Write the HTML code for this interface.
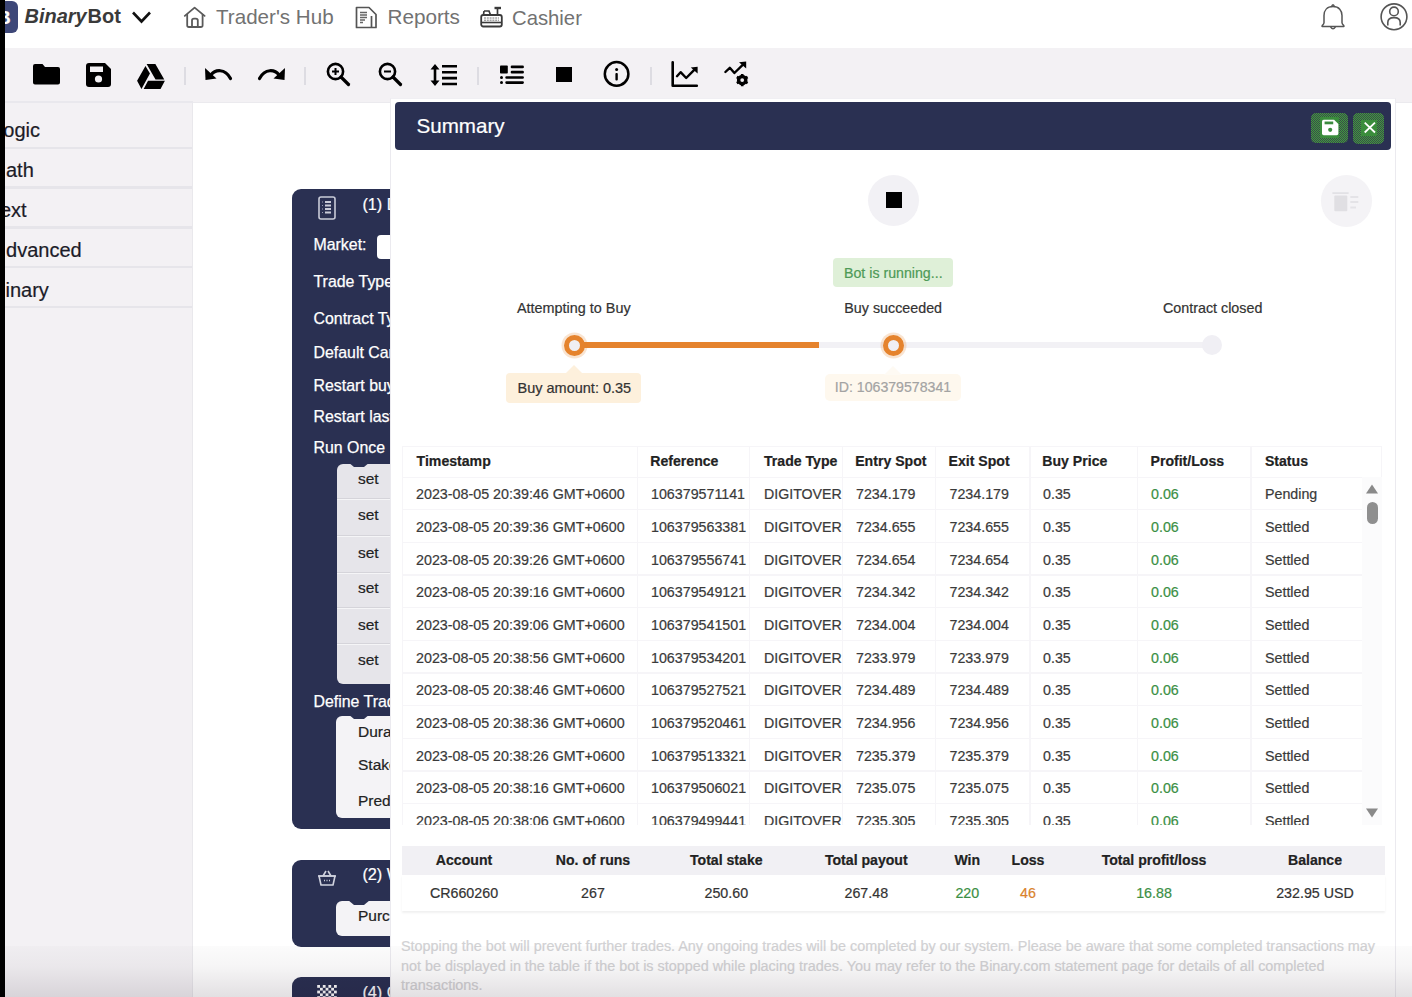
<!DOCTYPE html>
<html><head><meta charset="utf-8">
<style>
*{margin:0;padding:0;box-sizing:border-box}
html,body{width:1412px;height:997px;overflow:hidden;background:#fff;font-family:"Liberation Sans",sans-serif;color:#333;position:relative}
.a{position:absolute}
.t{position:absolute;white-space:nowrap;line-height:1;-webkit-text-stroke:0.2px currentColor}
svg.a{display:block;overflow:visible}
</style></head><body>
<div id="root" style="position:absolute;left:0;top:0;width:1412px;height:997px;overflow:hidden;">
<div class="a" style="left:0.00px;top:0.00px;width:1412.00px;height:48.00px;background:#fff;"></div>
<div class="a" style="left:-14.00px;top:1.00px;width:31.50px;height:31.50px;background:#3d4778;border-radius:6px;"></div>
<div class="t" style="left:-3.00px;top:7.92px;font-size:19px;color:#fff;font-weight:bold;">B</div>
<div class="t" style="left:24.50px;top:5.77px;font-size:20px;color:#3a3a3a;font-weight:bold;font-style:italic;-webkit-text-stroke:0;">Binary</div>
<div class="t" style="left:87.50px;top:5.77px;font-size:20px;color:#3a3a3a;font-weight:bold;-webkit-text-stroke:0;">Bot</div>
<svg class="a" style="left:131px;top:10px;" width="21" height="14" viewBox="0 0 21 14"><polyline points="2,2.5 10.5,11.5 19,2.5" fill="none" stroke="#111" stroke-width="2.6"/></svg>
<svg class="a" style="left:183px;top:5px;" width="24" height="24" viewBox="0 0 24 24"><path d="M1.8 10.9 L11.6 2.6 L21.6 10.9" fill="none" stroke="#5a5a5a" stroke-width="1.8" stroke-linecap="round" stroke-linejoin="round"/><path d="M4.2 9 V20.2 Q4.2 22 6 22 H17.8 Q19.6 22 19.6 20.2 V9" fill="none" stroke="#5a5a5a" stroke-width="1.8"/><path d="M9 22 V15.5 Q9 13.6 11 13.6 H12.8 Q14.8 13.6 14.8 15.5 V22" fill="none" stroke="#5a5a5a" stroke-width="1.8"/></svg>
<div class="t" style="left:216.00px;top:7.36px;font-size:20.6px;color:#727272;-webkit-text-stroke:0;">Trader's Hub</div>
<svg class="a" style="left:354px;top:5px;" width="25" height="24" viewBox="0 0 25 24"><path d="M2.5 2.5 H15 L22 9.5 V22.5 H2.5 Z M17.5 11 V22.5" fill="none" stroke="#555" stroke-width="1.7" stroke-linejoin="round"/><path d="M6 7.5 H13 M6 10 H13 M6 12.5 H13 M6 15 H11 M6 17.5 H9" stroke="#666" stroke-width="1.6"/></svg>
<div class="t" style="left:387.50px;top:7.28px;font-size:20.7px;color:#727272;-webkit-text-stroke:0;">Reports</div>
<svg class="a" style="left:480px;top:6px;" width="23" height="22" viewBox="0 0 23 22"><rect x="1.2" y="9" width="20.6" height="11.5" rx="2" fill="none" stroke="#3a3a3a" stroke-width="1.8"/><path d="M1.5 16.5 H21.5" stroke="#3a3a3a" stroke-width="1.6"/><path d="M4 5 H9 L10.5 9 M3.5 9 L4 5" fill="none" stroke="#3a3a3a" stroke-width="1.7"/><path d="M14.5 2 H21" stroke="#3a3a3a" stroke-width="2.4"/><path d="M17.5 3 V9" stroke="#3a3a3a" stroke-width="1.7"/><path d="M4 12 H19 M4 14.2 H19" stroke="#777" stroke-width="1" stroke-dasharray="2 0.8"/></svg>
<div class="t" style="left:512.00px;top:7.62px;font-size:20.3px;color:#727272;-webkit-text-stroke:0;">Cashier</div>
<svg class="a" style="left:1318px;top:2px;" width="30" height="30" viewBox="0 0 30 30"><path d="M15 4.6 C9 4.6 6 8.5 6 13.5 V20.8 Q6 22 4.2 23.6 Q3.5 24.6 5 24.6 H25 Q26.5 24.6 25.8 23.6 Q24 22 24 20.8 V13.5 C24 8.5 21 4.6 15 4.6 Z" fill="none" stroke="#555" stroke-width="1.5" stroke-linejoin="round"/><path d="M13.4 5 Q15 0.4 16.6 5" fill="none" stroke="#555" stroke-width="1.5"/><path d="M12.6 24.8 Q15 28.6 17.4 24.8" fill="none" stroke="#555" stroke-width="1.5"/></svg>
<svg class="a" style="left:1378px;top:2px;" width="32" height="31" viewBox="0 0 32 31"><circle cx="16" cy="14.8" r="12.9" fill="none" stroke="#555" stroke-width="1.6"/><circle cx="16" cy="9.4" r="4.3" fill="none" stroke="#555" stroke-width="1.6"/><path d="M9.8 23.5 V20.5 C9.8 17.2 12.5 15.6 16 15.6 C19.5 15.6 22.2 17.2 22.2 20.5 V23.5" fill="none" stroke="#555" stroke-width="1.6"/></svg>
<div class="a" style="left:0.00px;top:48.00px;width:1412.00px;height:54.00px;background:#f3f1f4;"></div>
<div class="a" style="left:0.00px;top:101.50px;width:1412.00px;height:1.00px;background:#ebeaee;"></div>
<svg class="a" style="left:33px;top:63px;" width="27" height="22" viewBox="0 0 27 22"><path d="M0 3 Q0 1 2 1 H9.5 L12 4 H25 Q27 4 27 6 V19.5 Q27 21.5 25 21.5 H2 Q0 21.5 0 19.5 Z" fill="#000"/></svg>
<svg class="a" style="left:86px;top:63px;" width="25" height="24" viewBox="0 0 25 24"><path d="M0 3 Q0 0 3 0 H19 L25 6 V21 Q25 24 22 24 H3 Q0 24 0 21 Z" fill="#000"/><rect x="4" y="3.5" width="13" height="5.5" fill="#f3f1f4"/><circle cx="12.5" cy="16" r="3.6" fill="#f3f1f4"/></svg>
<svg class="a" style="left:137px;top:64px;" width="28" height="25" viewBox="0 0 512 460"><path d="M339 282.9L175.4 0h161.2l163.6 282.9H339zm-137.5 23.6L120.9 460h310.5L512 306.5H201.5zM154.1 35.4L0 306.5 80.6 460 237 176.8 154.1 35.4z" fill="#000"/></svg>
<div class="a" style="left:183.50px;top:67.00px;width:2.00px;height:18.00px;background:#dddce2;"></div>
<svg class="a" style="left:204px;top:66px;" width="30" height="16" viewBox="0 0 30 16"><path d="M7 9 C11 3.5 21 2 26.5 12.5" fill="none" stroke="#000" stroke-width="3.2" stroke-linecap="round"/><path d="M1 2 L1.5 14 L12.5 12.5 Z" fill="#000"/></svg>
<svg class="a" style="left:256px;top:66px;" width="30" height="16" viewBox="0 0 30 16"><g transform="translate(30,0) scale(-1,1)"><path d="M7 9 C11 3.5 21 2 26.5 12.5" fill="none" stroke="#000" stroke-width="3.2" stroke-linecap="round"/><path d="M1 2 L1.5 14 L12.5 12.5 Z" fill="#000"/></g></svg>
<div class="a" style="left:303.50px;top:67.00px;width:2.00px;height:18.00px;background:#dddce2;"></div>
<svg class="a" style="left:326px;top:62px;" width="25" height="24" viewBox="0 0 25 24"><circle cx="9.5" cy="9.5" r="7.6" fill="none" stroke="#000" stroke-width="2.6"/><path d="M15 15 L22.5 22.5" stroke="#000" stroke-width="3.2" stroke-linecap="round"/><path d="M9.5 6 V13 M6 9.5 H13" stroke="#000" stroke-width="2"/></svg>
<svg class="a" style="left:378px;top:62px;" width="25" height="24" viewBox="0 0 25 24"><circle cx="9.5" cy="9.5" r="7.6" fill="none" stroke="#000" stroke-width="2.6"/><path d="M15 15 L22.5 22.5" stroke="#000" stroke-width="3.2" stroke-linecap="round"/><path d="M6 9.5 H13" stroke="#000" stroke-width="2"/></svg>
<svg class="a" style="left:429px;top:63px;" width="29" height="24" viewBox="0 0 29 24"><path d="M6 3 V21" stroke="#000" stroke-width="2.6"/><path d="M1.5 6.5 L6 1 L10.5 6.5 Z M1.5 17.5 L6 23 L10.5 17.5 Z" fill="#000"/><path d="M13 3.3 H28 M13 9.3 H28 M13 15.1 H28 M13 21 H28" stroke="#000" stroke-width="2.6"/></svg>
<div class="a" style="left:477.00px;top:67.00px;width:2.00px;height:18.00px;background:#dddce2;"></div>
<svg class="a" style="left:499px;top:65px;" width="26" height="20" viewBox="0 0 26 20"><rect x="1" y="0.6" width="7.8" height="7.9" rx="0.8" fill="#000"/><path d="M13 1.9 H23.6 M13 7.2 H23.6 M7.6 12.5 H23.6 M7.6 17.6 H23.6" stroke="#000" stroke-width="2.7" stroke-linecap="round"/><circle cx="2.5" cy="12.5" r="1.5" fill="#000"/><circle cx="2.5" cy="17.6" r="1.5" fill="#000"/></svg>
<div class="a" style="left:556.40px;top:66.60px;width:15.90px;height:15.60px;background:#000;"></div>
<svg class="a" style="left:602px;top:61px;" width="29" height="27" viewBox="0 0 29 27"><circle cx="14.6" cy="12.9" r="11.8" fill="none" stroke="#000" stroke-width="2.5"/><circle cx="14.6" cy="8.5" r="1.5" fill="#000"/><rect x="13.4" y="12" width="2.4" height="7.4" rx="1" fill="#000"/></svg>
<div class="a" style="left:650.00px;top:67.00px;width:2.00px;height:18.00px;background:#dddce2;"></div>
<svg class="a" style="left:670px;top:61px;" width="29" height="27" viewBox="0 0 29 27"><path d="M2.7 1.2 V24.8 H26.8" fill="none" stroke="#000" stroke-width="2.6" stroke-linecap="round" stroke-linejoin="round"/><path d="M7 15.2 L10.6 11.2 L16.2 17 L24 9.2" fill="none" stroke="#000" stroke-width="2.4" stroke-linecap="round" stroke-linejoin="round"/><path d="M20.8 6.6 L27.6 5.8 L27.6 12.4 Z" fill="#000"/></svg>
<svg class="a" style="left:723px;top:61px;" width="27" height="26" viewBox="0 0 27 26"><path d="M2.4 11 L6.8 6.8 L11.4 12 L20.5 3.2" fill="none" stroke="#000" stroke-width="2.4" stroke-linecap="round" stroke-linejoin="round"/><path d="M16 1.3 L23.2 0.6 L23.2 7.6 Z" fill="#000"/><g transform="translate(19.2,19.1)"><circle r="3.9" fill="none" stroke="#000" stroke-width="2.8"/><path d="M0 -6.2 V6.2 M-5.4 -3.1 L5.4 3.1 M-5.4 3.1 L5.4 -3.1" stroke="#000" stroke-width="2.6"/><circle r="1.9" fill="#f3f1f4"/></g></svg>
<div class="a" style="left:0.00px;top:101.00px;width:193.00px;height:896.00px;background:#f3f1f4;border-right:1.5px solid #e9e8ec;"></div>
<div class="a" style="left:0.00px;top:101.00px;width:193.00px;height:2.00px;background:#e9e8ed;"></div>
<div class="a" style="left:0.00px;top:146.50px;width:192.00px;height:2.50px;background:#e6e5ea;"></div>
<div class="t" style="left:-7.80px;top:120.27px;font-size:20px;color:#1c1c28;">Logic</div>
<div class="a" style="left:0.00px;top:186.30px;width:192.00px;height:2.50px;background:#e6e5ea;"></div>
<div class="t" style="left:5.96px;top:160.17px;font-size:20px;color:#1c1c28;">ath</div>
<div class="a" style="left:0.00px;top:226.10px;width:192.00px;height:2.50px;background:#e6e5ea;"></div>
<div class="t" style="left:-10.10px;top:200.07px;font-size:20px;color:#1c1c28;">Text</div>
<div class="a" style="left:0.00px;top:265.90px;width:192.00px;height:2.50px;background:#e6e5ea;"></div>
<div class="t" style="left:6.04px;top:239.97px;font-size:20px;color:#1c1c28;">dvanced</div>
<div class="a" style="left:0.00px;top:305.70px;width:192.00px;height:2.50px;background:#e6e5ea;"></div>
<div class="t" style="left:-7.90px;top:279.87px;font-size:20px;color:#1c1c28;">Binary</div>
<div class="a" style="left:291.50px;top:189.00px;width:140.00px;height:640.00px;background:#2a3052;border-radius:9px;"></div>
<svg class="a" style="left:318px;top:196px;" width="18" height="24" viewBox="0 0 18 24"><rect x="1" y="1" width="16" height="22" rx="2" fill="none" stroke="#c9cbd8" stroke-width="1.6"/><path d="M7 6 H13 M7 9.5 H13 M7 13 H13 M7 16.5 H13" stroke="#c9cbd8" stroke-width="1.8"/><path d="M4 6 H5 M4 9.5 H5 M4 13 H5 M4 16.5 H5" stroke="#9a9db5" stroke-width="1"/></svg>
<div class="t" style="left:362.40px;top:196.00px;font-size:16.3px;color:#fff;">(1) Define</div>
<div class="a" style="left:377.00px;top:235.00px;width:40.00px;height:23.50px;background:#fff;border-radius:4px;"></div>
<div class="t" style="left:313.50px;top:237.44px;font-size:15.9px;color:#fff;-webkit-text-stroke:0.25px #fff;">Market:</div>
<div class="t" style="left:313.50px;top:274.14px;font-size:15.9px;color:#fff;-webkit-text-stroke:0.25px #fff;">Trade Type</div>
<div class="t" style="left:313.50px;top:311.24px;font-size:15.9px;color:#fff;-webkit-text-stroke:0.25px #fff;">Contract Type</div>
<div class="t" style="left:313.50px;top:344.64px;font-size:15.9px;color:#fff;-webkit-text-stroke:0.25px #fff;">Default Candle</div>
<div class="t" style="left:313.50px;top:378.34px;font-size:15.9px;color:#fff;-webkit-text-stroke:0.25px #fff;">Restart buy/sell</div>
<div class="t" style="left:313.50px;top:408.74px;font-size:15.9px;color:#fff;-webkit-text-stroke:0.25px #fff;">Restart last</div>
<div class="t" style="left:313.50px;top:440.34px;font-size:15.9px;color:#fff;-webkit-text-stroke:0.25px #fff;">Run Once</div>
<div class="t" style="left:313.50px;top:693.94px;font-size:15.9px;color:#fff;-webkit-text-stroke:0.25px #fff;">Define Trade</div>
<div class="a" style="left:336.50px;top:463.80px;width:80.00px;height:220.50px;background:#e6e5ea;border-radius:6px 0 0 6px;"></div>
<div class="a" style="left:336.50px;top:497.60px;width:80.00px;height:1.00px;background:#d5d4da;"></div>
<div class="a" style="left:336.50px;top:498.60px;width:80.00px;height:1.00px;background:#f5f5f7;"></div>
<div class="a" style="left:336.50px;top:535.20px;width:80.00px;height:1.00px;background:#d5d4da;"></div>
<div class="a" style="left:336.50px;top:536.20px;width:80.00px;height:1.00px;background:#f5f5f7;"></div>
<div class="a" style="left:336.50px;top:571.50px;width:80.00px;height:1.00px;background:#d5d4da;"></div>
<div class="a" style="left:336.50px;top:572.50px;width:80.00px;height:1.00px;background:#f5f5f7;"></div>
<div class="a" style="left:336.50px;top:607.40px;width:80.00px;height:1.00px;background:#d5d4da;"></div>
<div class="a" style="left:336.50px;top:608.40px;width:80.00px;height:1.00px;background:#f5f5f7;"></div>
<div class="a" style="left:336.50px;top:643.00px;width:80.00px;height:1.00px;background:#d5d4da;"></div>
<div class="a" style="left:336.50px;top:644.00px;width:80.00px;height:1.00px;background:#f5f5f7;"></div>
<div class="t" style="left:358.00px;top:470.68px;font-size:15.5px;color:#222;">set</div>
<div class="t" style="left:358.00px;top:506.58px;font-size:15.5px;color:#222;">set</div>
<div class="t" style="left:358.00px;top:544.68px;font-size:15.5px;color:#222;">set</div>
<div class="t" style="left:358.00px;top:580.28px;font-size:15.5px;color:#222;">set</div>
<div class="t" style="left:358.00px;top:616.88px;font-size:15.5px;color:#222;">set</div>
<div class="t" style="left:358.00px;top:652.38px;font-size:15.5px;color:#222;">set</div>
<svg class="a" style="left:348px;top:462px;" width="24" height="6" viewBox="0 0 24 6"><path d="M0 0 L6 5 H16 L22 0 Z" fill="#2a3052"/></svg>
<div class="a" style="left:336.00px;top:715.60px;width:80.00px;height:102.60px;background:#f4f3f6;border-radius:6px 0 0 6px;"></div>
<svg class="a" style="left:348px;top:714px;" width="24" height="6" viewBox="0 0 24 6"><path d="M0 0 L6 5 H16 L22 0 Z" fill="#2a3052"/></svg>
<div class="t" style="left:358.00px;top:724.08px;font-size:15.5px;color:#222;">Duration</div>
<div class="t" style="left:358.00px;top:757.48px;font-size:15.5px;color:#222;">Stake</div>
<div class="t" style="left:358.00px;top:793.38px;font-size:15.5px;color:#222;">Prediction</div>
<div class="a" style="left:291.50px;top:859.50px;width:140.00px;height:87.50px;background:#2a3052;border-radius:9px;"></div>
<svg class="a" style="left:317px;top:869px;" width="20" height="18" viewBox="0 0 20 18"><path d="M2 7 H18 L16 16 H4 Z" fill="none" stroke="#d0d2de" stroke-width="1.6" stroke-linejoin="round"/><path d="M6 7 L9 2 M14 7 L11 2 M1 7 H19" stroke="#d0d2de" stroke-width="1.6"/><path d="M7 11.5 H8 M9.5 11.5 H10.5 M12 11.5 H13" stroke="#d0d2de" stroke-width="1.4"/></svg>
<div class="t" style="left:362.40px;top:866.30px;font-size:16.3px;color:#fff;">(2) Watch</div>
<div class="a" style="left:336.00px;top:900.80px;width:80.00px;height:35.00px;background:#f4f3f6;border-radius:6px 0 0 6px;"></div>
<svg class="a" style="left:348px;top:899.5px;" width="24" height="6" viewBox="0 0 24 6"><path d="M0 0 L6 5 H16 L22 0 Z" fill="#2a3052"/></svg>
<div class="t" style="left:358.00px;top:908.38px;font-size:15.5px;color:#222;">Purchase</div>
<div class="a" style="left:291.50px;top:977.00px;width:140.00px;height:40.00px;background:#2a3052;border-radius:9px;"></div>
<svg class="a" style="left:317px;top:985px;" width="20" height="14" viewBox="0 0 21 15"><rect x="0" y="0" width="3" height="3" fill="#fff"/><rect x="6" y="0" width="3" height="3" fill="#fff"/><rect x="12" y="0" width="3" height="3" fill="#fff"/><rect x="18" y="0" width="3" height="3" fill="#fff"/><rect x="3" y="3" width="3" height="3" fill="#fff"/><rect x="9" y="3" width="3" height="3" fill="#fff"/><rect x="15" y="3" width="3" height="3" fill="#fff"/><rect x="0" y="6" width="3" height="3" fill="#fff"/><rect x="6" y="6" width="3" height="3" fill="#fff"/><rect x="12" y="6" width="3" height="3" fill="#fff"/><rect x="18" y="6" width="3" height="3" fill="#fff"/><rect x="3" y="9" width="3" height="3" fill="#fff"/><rect x="9" y="9" width="3" height="3" fill="#fff"/><rect x="15" y="9" width="3" height="3" fill="#fff"/><rect x="0" y="12" width="3" height="3" fill="#fff"/><rect x="6" y="12" width="3" height="3" fill="#fff"/><rect x="12" y="12" width="3" height="3" fill="#fff"/><rect x="18" y="12" width="3" height="3" fill="#fff"/></svg>
<div class="t" style="left:362.40px;top:983.80px;font-size:16.3px;color:#fff;">(4) Conditions</div>
<div class="a" id="panel" style="left:390px;top:98px;width:1006px;height:899px;background:#fff;border-left:1px solid #ebeaef;border-right:1.5px solid #ebeaef;border-top:1px solid #f0eff3;">
</div>
<div class="a" style="left:395.00px;top:102.30px;width:996.30px;height:48.20px;background:#2a3052;border-radius:4px;"></div>
<div class="t" style="left:416.50px;top:116.16px;font-size:20.6px;color:#fff;">Summary</div>
<div class="a" style="left:1311.30px;top:113.00px;width:36.50px;height:30.00px;background:#3b8b3e;border-radius:5px;background:repeating-conic-gradient(#3f9a40 0 25%, #3a4a48 0 50%) 0 0/2px 2px;"></div>
<div class="a" style="left:1320.00px;top:117.30px;width:19.00px;height:21.00px;background:#3a8d3c;border-radius:2px;"></div>
<svg class="a" style="left:1322px;top:119.2px;" width="16.4" height="16.8" viewBox="0 0 19 18"><path d="M0 2 Q0 0 2 0 H14 L19 5 V16 Q19 18 17 18 H2 Q0 18 0 16 Z" fill="#fff"/><rect x="3" y="2.2" width="10" height="3.2" fill="#3b8b3e"/><circle cx="9.5" cy="11.8" r="2.4" fill="#3b8b3e"/></svg>
<div class="a" style="left:1352.90px;top:113.00px;width:31.30px;height:31.00px;background:#3b8b3e;border-radius:5px;background:repeating-conic-gradient(#3f9a40 0 25%, #3a4a48 0 50%) 0 0/2px 2px;"></div>
<div class="a" style="left:1361.30px;top:120.00px;width:15.40px;height:16.40px;background:#3a8d3c;"></div>
<svg class="a" style="left:1363.6px;top:122.4px;" width="11.7" height="11.2" viewBox="0 0 11.7 11.2"><path d="M0.7 0.7 L11 10.5 M11 0.7 L0.7 10.5" stroke="#fff" stroke-width="1.8"/></svg>
<div class="a" style="left:867.50px;top:174.50px;width:51.50px;height:51.50px;background:#f2f1f5;border-radius:50%;"></div>
<div class="a" style="left:885.50px;top:192.00px;width:16.00px;height:16.00px;background:#000;"></div>
<div class="a" style="left:1320.80px;top:175.00px;width:51.50px;height:51.50px;background:#f4f3f6;border-radius:50%;"></div>
<svg class="a" style="left:1330px;top:188px;" width="30" height="26" viewBox="0 0 30 26"><rect x="2.4" y="4.2" width="16.2" height="1.8" fill="#e2e1e5"/><rect x="4.3" y="7.6" width="13" height="15.6" rx="1" fill="#e0dfe3"/><path d="M20.3 9 H28.3 M20.3 14.1 H28.3 M20.3 19.4 H26" stroke="#e4e3e7" stroke-width="2"/></svg>
<div class="a" style="left:832.80px;top:257.70px;width:120.40px;height:29.50px;background:#dff0d8;border-radius:4px;"></div>
<div class="t" style="left:844.00px;top:265.98px;font-size:14.2px;color:#4e9a57;">Bot is running...</div>
<div class="t" style="left:517.00px;top:301.31px;font-size:14.4px;color:#333;">Attempting to Buy</div>
<div class="t" style="left:844.30px;top:301.30px;font-size:14.3px;color:#333;">Buy succeeded</div>
<div class="t" style="left:1163.00px;top:301.30px;font-size:14.3px;color:#333;">Contract closed</div>
<div class="a" style="left:574.00px;top:342.00px;width:645.00px;height:5.50px;background:#f2f1f5;"></div>
<div class="a" style="left:574.00px;top:341.80px;width:245.00px;height:5.80px;background:#e5832d;"></div>
<div class="a" style="left:563.50px;top:334.50px;width:21.00px;height:21.00px;background:#f0eff4;border-radius:50%;border:5.2px solid #e5832d;box-shadow:0 0 0 2.5px rgba(229,131,45,0.22);"></div>
<div class="a" style="left:882.50px;top:334.50px;width:21.00px;height:21.00px;background:#f0eff4;border-radius:50%;border:5.2px solid #e5832d;box-shadow:0 0 0 2.5px rgba(229,131,45,0.22);"></div>
<div class="a" style="left:1202.00px;top:335.00px;width:20.00px;height:20.00px;background:#f0eff4;border-radius:50%;"></div>
<div class="a" style="left:506.00px;top:373.00px;width:135.00px;height:30.00px;background:#fdf0dc;border-radius:4px;"></div>
<svg class="a" style="left:565px;top:364px;" width="18" height="10" viewBox="0 0 18 10"><path d="M0 10 L9 1 L18 10 Z" fill="#fdf0dc"/></svg>
<div class="t" style="left:517.50px;top:381.03px;font-size:14.5px;color:#333;">Buy amount: 0.35</div>
<div class="a" style="left:825.00px;top:373.60px;width:136.00px;height:27.50px;background:#fef8ee;border-radius:5px;"></div>
<svg class="a" style="left:884px;top:365px;" width="18" height="10" viewBox="0 0 18 10"><path d="M0 10 L9 1 L18 10 Z" fill="#fefaf3"/></svg>
<div class="t" style="left:834.80px;top:380.02px;font-size:14.15px;color:#a3a3a3;">ID: 106379578341</div>
<div class="a" style="left:402px;top:446px;width:980px;height:379px;overflow:hidden;">
<div class="a" style="left:0;top:0;width:980px;height:31.5px;border:1px solid #f6f5f8;"></div>
<div class="t" style="left:14.60px;top:8.36px;font-size:14.1px;color:#222;font-weight:bold;">Timestamp</div>
<div class="t" style="left:248.30px;top:8.36px;font-size:14.1px;color:#222;font-weight:bold;">Reference</div>
<div class="t" style="left:362.00px;top:8.36px;font-size:14.1px;color:#222;font-weight:bold;">Trade Type</div>
<div class="t" style="left:453.20px;top:8.36px;font-size:14.1px;color:#222;font-weight:bold;">Entry Spot</div>
<div class="t" style="left:546.60px;top:8.36px;font-size:14.1px;color:#222;font-weight:bold;">Exit Spot</div>
<div class="t" style="left:640.30px;top:8.36px;font-size:14.1px;color:#222;font-weight:bold;">Buy Price</div>
<div class="t" style="left:748.50px;top:8.36px;font-size:14.1px;color:#222;font-weight:bold;">Profit/Loss</div>
<div class="t" style="left:862.90px;top:8.36px;font-size:14.1px;color:#222;font-weight:bold;">Status</div>
<div class="a" style="left:234.50px;top:0.00px;width:1.20px;height:379.00px;background:#f6f5f8;"></div>
<div class="a" style="left:347.10px;top:0.00px;width:1.20px;height:379.00px;background:#f6f5f8;"></div>
<div class="a" style="left:440.00px;top:0.00px;width:1.20px;height:379.00px;background:#f6f5f8;"></div>
<div class="a" style="left:533.00px;top:0.00px;width:1.20px;height:379.00px;background:#f6f5f8;"></div>
<div class="a" style="left:627.40px;top:0.00px;width:1.20px;height:379.00px;background:#f6f5f8;"></div>
<div class="a" style="left:735.10px;top:0.00px;width:1.20px;height:379.00px;background:#f6f5f8;"></div>
<div class="a" style="left:848.40px;top:0.00px;width:1.20px;height:379.00px;background:#f6f5f8;"></div>
<div class="a" style="left:0.00px;top:0.00px;width:1.20px;height:379.00px;background:#f6f5f8;"></div>
<div class="t" style="left:14.00px;top:41.30px;font-size:14.3px;color:#3a3a3a;">2023-08-05 20:39:46 GMT+0600</div>
<div class="t" style="left:249.00px;top:41.34px;font-size:14.25px;color:#3a3a3a;">106379571141</div>
<div class="t" style="left:362.00px;top:41.38px;font-size:14.2px;color:#3a3a3a;">DIGITOVER</div>
<div class="t" style="left:454.00px;top:41.34px;font-size:14.25px;color:#3a3a3a;">7234.179</div>
<div class="t" style="left:547.50px;top:41.34px;font-size:14.25px;color:#3a3a3a;">7234.179</div>
<div class="t" style="left:641.00px;top:41.34px;font-size:14.25px;color:#3a3a3a;">0.35</div>
<div class="t" style="left:749.00px;top:41.34px;font-size:14.25px;color:#3b8f45;">0.06</div>
<div class="t" style="left:863.00px;top:41.34px;font-size:14.25px;color:#3a3a3a;">Pending</div>
<div class="a" style="left:0.00px;top:63.07px;width:960.00px;height:1.30px;background:#f6f5f8;"></div>
<div class="t" style="left:14.00px;top:73.97px;font-size:14.3px;color:#3a3a3a;">2023-08-05 20:39:36 GMT+0600</div>
<div class="t" style="left:249.00px;top:74.01px;font-size:14.25px;color:#3a3a3a;">106379563381</div>
<div class="t" style="left:362.00px;top:74.05px;font-size:14.2px;color:#3a3a3a;">DIGITOVER</div>
<div class="t" style="left:454.00px;top:74.01px;font-size:14.25px;color:#3a3a3a;">7234.655</div>
<div class="t" style="left:547.50px;top:74.01px;font-size:14.25px;color:#3a3a3a;">7234.655</div>
<div class="t" style="left:641.00px;top:74.01px;font-size:14.25px;color:#3a3a3a;">0.35</div>
<div class="t" style="left:749.00px;top:74.01px;font-size:14.25px;color:#3b8f45;">0.06</div>
<div class="t" style="left:863.00px;top:74.01px;font-size:14.25px;color:#3a3a3a;">Settled</div>
<div class="a" style="left:0.00px;top:95.74px;width:960.00px;height:1.30px;background:#f6f5f8;"></div>
<div class="t" style="left:14.00px;top:106.64px;font-size:14.3px;color:#3a3a3a;">2023-08-05 20:39:26 GMT+0600</div>
<div class="t" style="left:249.00px;top:106.68px;font-size:14.25px;color:#3a3a3a;">106379556741</div>
<div class="t" style="left:362.00px;top:106.72px;font-size:14.2px;color:#3a3a3a;">DIGITOVER</div>
<div class="t" style="left:454.00px;top:106.68px;font-size:14.25px;color:#3a3a3a;">7234.654</div>
<div class="t" style="left:547.50px;top:106.68px;font-size:14.25px;color:#3a3a3a;">7234.654</div>
<div class="t" style="left:641.00px;top:106.68px;font-size:14.25px;color:#3a3a3a;">0.35</div>
<div class="t" style="left:749.00px;top:106.68px;font-size:14.25px;color:#3b8f45;">0.06</div>
<div class="t" style="left:863.00px;top:106.68px;font-size:14.25px;color:#3a3a3a;">Settled</div>
<div class="a" style="left:0.00px;top:128.41px;width:960.00px;height:1.30px;background:#f6f5f8;"></div>
<div class="t" style="left:14.00px;top:139.31px;font-size:14.3px;color:#3a3a3a;">2023-08-05 20:39:16 GMT+0600</div>
<div class="t" style="left:249.00px;top:139.35px;font-size:14.25px;color:#3a3a3a;">106379549121</div>
<div class="t" style="left:362.00px;top:139.39px;font-size:14.2px;color:#3a3a3a;">DIGITOVER</div>
<div class="t" style="left:454.00px;top:139.35px;font-size:14.25px;color:#3a3a3a;">7234.342</div>
<div class="t" style="left:547.50px;top:139.35px;font-size:14.25px;color:#3a3a3a;">7234.342</div>
<div class="t" style="left:641.00px;top:139.35px;font-size:14.25px;color:#3a3a3a;">0.35</div>
<div class="t" style="left:749.00px;top:139.35px;font-size:14.25px;color:#3b8f45;">0.06</div>
<div class="t" style="left:863.00px;top:139.35px;font-size:14.25px;color:#3a3a3a;">Settled</div>
<div class="a" style="left:0.00px;top:161.08px;width:960.00px;height:1.30px;background:#f6f5f8;"></div>
<div class="t" style="left:14.00px;top:171.98px;font-size:14.3px;color:#3a3a3a;">2023-08-05 20:39:06 GMT+0600</div>
<div class="t" style="left:249.00px;top:172.02px;font-size:14.25px;color:#3a3a3a;">106379541501</div>
<div class="t" style="left:362.00px;top:172.06px;font-size:14.2px;color:#3a3a3a;">DIGITOVER</div>
<div class="t" style="left:454.00px;top:172.02px;font-size:14.25px;color:#3a3a3a;">7234.004</div>
<div class="t" style="left:547.50px;top:172.02px;font-size:14.25px;color:#3a3a3a;">7234.004</div>
<div class="t" style="left:641.00px;top:172.02px;font-size:14.25px;color:#3a3a3a;">0.35</div>
<div class="t" style="left:749.00px;top:172.02px;font-size:14.25px;color:#3b8f45;">0.06</div>
<div class="t" style="left:863.00px;top:172.02px;font-size:14.25px;color:#3a3a3a;">Settled</div>
<div class="a" style="left:0.00px;top:193.75px;width:960.00px;height:1.30px;background:#f6f5f8;"></div>
<div class="t" style="left:14.00px;top:204.65px;font-size:14.3px;color:#3a3a3a;">2023-08-05 20:38:56 GMT+0600</div>
<div class="t" style="left:249.00px;top:204.69px;font-size:14.25px;color:#3a3a3a;">106379534201</div>
<div class="t" style="left:362.00px;top:204.73px;font-size:14.2px;color:#3a3a3a;">DIGITOVER</div>
<div class="t" style="left:454.00px;top:204.69px;font-size:14.25px;color:#3a3a3a;">7233.979</div>
<div class="t" style="left:547.50px;top:204.69px;font-size:14.25px;color:#3a3a3a;">7233.979</div>
<div class="t" style="left:641.00px;top:204.69px;font-size:14.25px;color:#3a3a3a;">0.35</div>
<div class="t" style="left:749.00px;top:204.69px;font-size:14.25px;color:#3b8f45;">0.06</div>
<div class="t" style="left:863.00px;top:204.69px;font-size:14.25px;color:#3a3a3a;">Settled</div>
<div class="a" style="left:0.00px;top:226.42px;width:960.00px;height:1.30px;background:#f6f5f8;"></div>
<div class="t" style="left:14.00px;top:237.32px;font-size:14.3px;color:#3a3a3a;">2023-08-05 20:38:46 GMT+0600</div>
<div class="t" style="left:249.00px;top:237.36px;font-size:14.25px;color:#3a3a3a;">106379527521</div>
<div class="t" style="left:362.00px;top:237.40px;font-size:14.2px;color:#3a3a3a;">DIGITOVER</div>
<div class="t" style="left:454.00px;top:237.36px;font-size:14.25px;color:#3a3a3a;">7234.489</div>
<div class="t" style="left:547.50px;top:237.36px;font-size:14.25px;color:#3a3a3a;">7234.489</div>
<div class="t" style="left:641.00px;top:237.36px;font-size:14.25px;color:#3a3a3a;">0.35</div>
<div class="t" style="left:749.00px;top:237.36px;font-size:14.25px;color:#3b8f45;">0.06</div>
<div class="t" style="left:863.00px;top:237.36px;font-size:14.25px;color:#3a3a3a;">Settled</div>
<div class="a" style="left:0.00px;top:259.09px;width:960.00px;height:1.30px;background:#f6f5f8;"></div>
<div class="t" style="left:14.00px;top:269.99px;font-size:14.3px;color:#3a3a3a;">2023-08-05 20:38:36 GMT+0600</div>
<div class="t" style="left:249.00px;top:270.03px;font-size:14.25px;color:#3a3a3a;">106379520461</div>
<div class="t" style="left:362.00px;top:270.07px;font-size:14.2px;color:#3a3a3a;">DIGITOVER</div>
<div class="t" style="left:454.00px;top:270.03px;font-size:14.25px;color:#3a3a3a;">7234.956</div>
<div class="t" style="left:547.50px;top:270.03px;font-size:14.25px;color:#3a3a3a;">7234.956</div>
<div class="t" style="left:641.00px;top:270.03px;font-size:14.25px;color:#3a3a3a;">0.35</div>
<div class="t" style="left:749.00px;top:270.03px;font-size:14.25px;color:#3b8f45;">0.06</div>
<div class="t" style="left:863.00px;top:270.03px;font-size:14.25px;color:#3a3a3a;">Settled</div>
<div class="a" style="left:0.00px;top:291.76px;width:960.00px;height:1.30px;background:#f6f5f8;"></div>
<div class="t" style="left:14.00px;top:302.66px;font-size:14.3px;color:#3a3a3a;">2023-08-05 20:38:26 GMT+0600</div>
<div class="t" style="left:249.00px;top:302.70px;font-size:14.25px;color:#3a3a3a;">106379513321</div>
<div class="t" style="left:362.00px;top:302.74px;font-size:14.2px;color:#3a3a3a;">DIGITOVER</div>
<div class="t" style="left:454.00px;top:302.70px;font-size:14.25px;color:#3a3a3a;">7235.379</div>
<div class="t" style="left:547.50px;top:302.70px;font-size:14.25px;color:#3a3a3a;">7235.379</div>
<div class="t" style="left:641.00px;top:302.70px;font-size:14.25px;color:#3a3a3a;">0.35</div>
<div class="t" style="left:749.00px;top:302.70px;font-size:14.25px;color:#3b8f45;">0.06</div>
<div class="t" style="left:863.00px;top:302.70px;font-size:14.25px;color:#3a3a3a;">Settled</div>
<div class="a" style="left:0.00px;top:324.43px;width:960.00px;height:1.30px;background:#f6f5f8;"></div>
<div class="t" style="left:14.00px;top:335.33px;font-size:14.3px;color:#3a3a3a;">2023-08-05 20:38:16 GMT+0600</div>
<div class="t" style="left:249.00px;top:335.37px;font-size:14.25px;color:#3a3a3a;">106379506021</div>
<div class="t" style="left:362.00px;top:335.41px;font-size:14.2px;color:#3a3a3a;">DIGITOVER</div>
<div class="t" style="left:454.00px;top:335.37px;font-size:14.25px;color:#3a3a3a;">7235.075</div>
<div class="t" style="left:547.50px;top:335.37px;font-size:14.25px;color:#3a3a3a;">7235.075</div>
<div class="t" style="left:641.00px;top:335.37px;font-size:14.25px;color:#3a3a3a;">0.35</div>
<div class="t" style="left:749.00px;top:335.37px;font-size:14.25px;color:#3b8f45;">0.06</div>
<div class="t" style="left:863.00px;top:335.37px;font-size:14.25px;color:#3a3a3a;">Settled</div>
<div class="a" style="left:0.00px;top:357.10px;width:960.00px;height:1.30px;background:#f6f5f8;"></div>
<div class="t" style="left:14.00px;top:368.00px;font-size:14.3px;color:#3a3a3a;">2023-08-05 20:38:06 GMT+0600</div>
<div class="t" style="left:249.00px;top:368.04px;font-size:14.25px;color:#3a3a3a;">106379499441</div>
<div class="t" style="left:362.00px;top:368.08px;font-size:14.2px;color:#3a3a3a;">DIGITOVER</div>
<div class="t" style="left:454.00px;top:368.04px;font-size:14.25px;color:#3a3a3a;">7235.305</div>
<div class="t" style="left:547.50px;top:368.04px;font-size:14.25px;color:#3a3a3a;">7235.305</div>
<div class="t" style="left:641.00px;top:368.04px;font-size:14.25px;color:#3a3a3a;">0.35</div>
<div class="t" style="left:749.00px;top:368.04px;font-size:14.25px;color:#3b8f45;">0.06</div>
<div class="t" style="left:863.00px;top:368.04px;font-size:14.25px;color:#3a3a3a;">Settled</div>
<div class="a" style="left:960.00px;top:31.00px;width:20.00px;height:348.00px;background:#fbfbfc;"></div>
<svg class="a" style="left:964px;top:38px;" width="12" height="10" viewBox="0 0 12 10"><path d="M0 9.5 L6 0.5 L12 9.5 Z" fill="#8a8a8a"/></svg>
<div class="a" style="left:964.60px;top:56.00px;width:11.00px;height:22.00px;background:#8f8f8f;border-radius:5.5px;"></div>
<svg class="a" style="left:964px;top:362px;" width="12" height="10" viewBox="0 0 12 10"><path d="M0 0.5 L6 9.5 L12 0.5 Z" fill="#8a8a8a"/></svg>
</div>
<div class="a" style="left:402.00px;top:846.00px;width:983.00px;height:28.60px;background:#f1f0f4;"></div>
<div class="a" style="left:402.00px;top:874.60px;width:983.00px;height:36.00px;background:#fff;box-shadow:0 1.5px 2px rgba(0,0,0,0.06);"></div>
<div class="t" style="left:464.00px;transform:translateX(-50%);top:853.46px;font-size:14.1px;color:#222;font-weight:bold;">Account</div>
<div class="t" style="left:464.00px;transform:translateX(-50%);top:886.04px;font-size:14.25px;color:#333;">CR660260</div>
<div class="t" style="left:593.00px;transform:translateX(-50%);top:853.46px;font-size:14.1px;color:#222;font-weight:bold;">No. of runs</div>
<div class="t" style="left:593.00px;transform:translateX(-50%);top:886.04px;font-size:14.25px;color:#333;">267</div>
<div class="t" style="left:726.30px;transform:translateX(-50%);top:853.46px;font-size:14.1px;color:#222;font-weight:bold;">Total stake</div>
<div class="t" style="left:726.30px;transform:translateX(-50%);top:886.04px;font-size:14.25px;color:#333;">250.60</div>
<div class="t" style="left:866.30px;transform:translateX(-50%);top:853.46px;font-size:14.1px;color:#222;font-weight:bold;">Total payout</div>
<div class="t" style="left:866.30px;transform:translateX(-50%);top:886.04px;font-size:14.25px;color:#333;">267.48</div>
<div class="t" style="left:967.30px;transform:translateX(-50%);top:853.46px;font-size:14.1px;color:#222;font-weight:bold;">Win</div>
<div class="t" style="left:967.30px;transform:translateX(-50%);top:886.04px;font-size:14.25px;color:#3b8f45;">220</div>
<div class="t" style="left:1028.00px;transform:translateX(-50%);top:853.46px;font-size:14.1px;color:#222;font-weight:bold;">Loss</div>
<div class="t" style="left:1028.00px;transform:translateX(-50%);top:886.04px;font-size:14.25px;color:#d9822b;">46</div>
<div class="t" style="left:1154.00px;transform:translateX(-50%);top:853.46px;font-size:14.1px;color:#222;font-weight:bold;">Total profit/loss</div>
<div class="t" style="left:1154.00px;transform:translateX(-50%);top:886.04px;font-size:14.25px;color:#3b8f45;">16.88</div>
<div class="t" style="left:1315.00px;transform:translateX(-50%);top:853.46px;font-size:14.1px;color:#222;font-weight:bold;">Balance</div>
<div class="t" style="left:1315.00px;transform:translateX(-50%);top:886.04px;font-size:14.25px;color:#333;">232.95 USD</div>
<div class="t" style="left:401.00px;top:938.53px;font-size:14.38px;color:#d2d2d4;">Stopping the bot will prevent further trades. Any ongoing trades will be completed by our system. Please be aware that some completed transactions may</div>
<div class="t" style="left:401.00px;top:959.13px;font-size:14.38px;color:#d2d2d4;">not be displayed in the table if the bot is stopped while placing trades. You may refer to the Binary.com statement page for details of all completed</div>
<div class="t" style="left:401.00px;top:978.23px;font-size:14.38px;color:#d2d2d4;">transactions.</div>
<div class="a" style="left:0.00px;top:945.50px;width:1412.00px;height:51.50px;background:linear-gradient(to bottom, rgba(20,0,20,0.015) 0%, rgba(20,0,20,0.04) 40%, rgba(20,0,20,0.12) 100%);z-index:40;"></div>
<div class="a" style="left:0.00px;top:0.00px;width:5.00px;height:997.00px;background:#000;z-index:50;"></div>
</div></body></html>
